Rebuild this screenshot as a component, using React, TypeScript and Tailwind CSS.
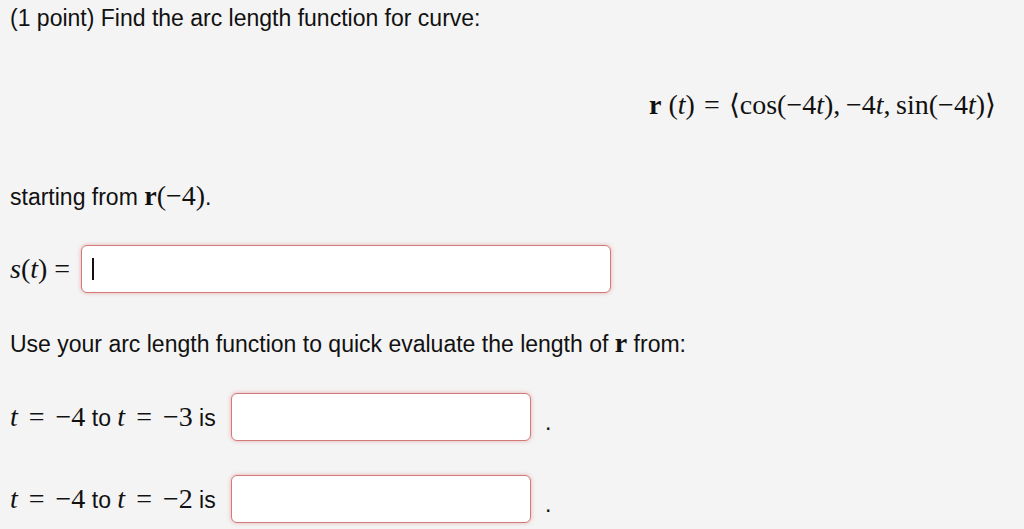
import React from 'react';

const serif = "font-['Liberation_Serif','Times_New_Roman',serif] text-[28px]";

function Box({ className }: { className: string }) {
  return (
    <div
      className={`bg-white border border-[#d27a7a] rounded-[6px] shadow-[0_0_4px_rgba(210,90,90,0.45)] ${className}`}
    />
  );
}

const Eq = ({ wide }: { wide?: boolean }) => (
  <span className={wide ? 'mx-[11px]' : 'mx-[9px]'}>=</span>
);

export default function App() {
  return (
    <div className="w-[1024px] h-[529px] overflow-hidden bg-[#f4f4f4] text-[#111] font-['Liberation_Sans',Arial,sans-serif] text-[23px] leading-none">
      <p className="pl-[10px] pt-[7px]">(1 point) Find the arc length function for curve:</p>

      {/* display formula */}
      <div className={`flex justify-end pr-[28px] mt-[61px] ${serif}`}>
        <span>
          <b>r</b>&nbsp;(<i>t</i>)
          <Eq />
          ⟨cos(−4<i>t</i>),&thinsp;−4<i>t</i>,&thinsp;sin(−4<i>t</i>)⟩
        </span>
      </div>

      <p className="pl-[10px] mt-[63px]">
        starting from <span className={serif}><b>r</b>(−4)</span>.
      </p>

      <div className="flex items-center pl-[10px] mt-[35px]">
        <span className={`${serif} w-[71px]`}>
          <i>s</i>(<i>t</i>)<span className="ml-[7px]">=</span>
        </span>
        <div className="relative">
          <Box className="w-[530px] h-[48px]" />
          <div className="absolute left-[11px] top-[13px] w-[2px] h-[22px] bg-[#111]" />
        </div>
      </div>

      <p className="pl-[10px] mt-[36px]">
        Use your arc length function to quick evaluate the length of{' '}
        <b className={serif}>r</b> from:
      </p>

      <div className="flex items-center pl-[10px] mt-[36px]">
        <span className="w-[221px] whitespace-nowrap">
          <span className={serif}><i>t</i><Eq wide />−4</span> to{' '}
          <span className={serif}><i>t</i><Eq wide />−3</span> is
        </span>
        <Box className="w-[300px] h-[48px]" />
        <span className="ml-[14px] mt-[10px]">.</span>
      </div>

      <div className="flex items-center pl-[10px] mt-[34px]">
        <span className="w-[221px] whitespace-nowrap">
          <span className={serif}><i>t</i><Eq wide />−4</span> to{' '}
          <span className={serif}><i>t</i><Eq wide />−2</span> is
        </span>
        <Box className="w-[300px] h-[48px]" />
        <span className="ml-[14px] mt-[10px]">.</span>
      </div>
    </div>
  );
}
